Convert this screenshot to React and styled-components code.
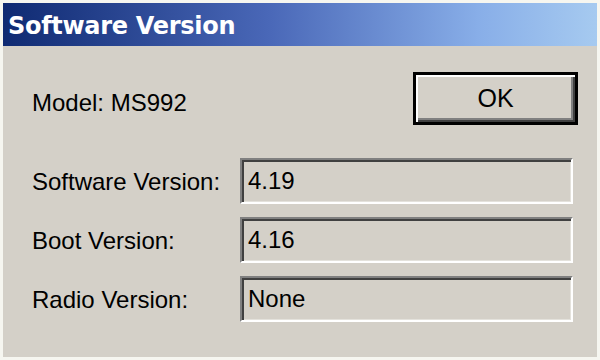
import React from "react";
import styled, { createGlobalStyle } from "styled-components";

const Global = createGlobalStyle`
  html, body {
    margin: 0;
    padding: 0;
    background: #f6f6f0;
  }
`;

const Window = styled.div`
  width: 594px;
  height: 354px;
  margin: 3px;
  display: flex;
  flex-direction: column;
  background: #d4d0c8;
  font-family: "Liberation Sans", Arial, sans-serif;
  color: #000;
  overflow: hidden;
`;

const TitleBar = styled.div`
  height: 43px;
  display: flex;
  align-items: center;
  padding: 3px 0 0 5px;
  box-sizing: border-box;
  background: linear-gradient(90deg, #0f2a72 0%, #4a68b8 45%, #88aee8 80%, #a6caf0 100%);
  color: #fff;
  font-family: "DejaVu Sans", Verdana, sans-serif;
  font-weight: bold;
  font-size: 24px;
  letter-spacing: -0.3px;
`;

const Body = styled.div`
  flex: 1;
  display: flex;
  flex-direction: column;
  padding: 26px 19px 0 29px;
`;

const TopRow = styled.div`
  display: flex;
  justify-content: space-between;
  align-items: flex-start;
  height: 53px;
`;

const Model = styled.div`
  margin-top: 17px;
  font-size: 24px;
  line-height: 28px;
`;

const Button = styled.button`
  width: 165px;
  height: 53px;
  padding: 0;
  background: #d4d0c8;
  border: 3px solid #000;
  box-shadow: inset 2px 2px 0 #ffffff, inset -2px -2px 0 #404040, inset -4px -4px 0 #808080;
  font-family: "Liberation Sans", Arial, sans-serif;
  font-size: 25px;
  color: #000;
`;

const Fields = styled.div`
  margin-top: 33px;
  display: flex;
  flex-direction: column;
  gap: 13px;
`;

const FieldRow = styled.div`
  display: grid;
  grid-template-columns: 208px 333px;
  align-items: center;
  height: 46px;
`;

const Label = styled.div`
  font-size: 24px;
  line-height: 28px;
  padding-top: 2px;
`;

const ValueBox = styled.div`
  height: 46px;
  box-sizing: border-box;
  display: flex;
  align-items: center;
  padding-left: 6px;
  background: #d4d0c8;
  border: 2px solid;
  border-color: #808080 #ffffff #ffffff #808080;
  box-shadow: inset 2px 2px 0 #404040, inset -1px -1px 0 #e4e2dc;
  font-size: 24px;
`;

const fields = [
  { label: "Software Version:", value: "4.19" },
  { label: "Boot Version:", value: "4.16" },
  { label: "Radio Version:", value: "None" },
];

const App = () => {
  return (
    <Window>
      <Global />
      <TitleBar>Software Version</TitleBar>
      <Body>
        <TopRow>
          <Model>Model: MS992</Model>
          <Button>OK</Button>
        </TopRow>
        <Fields>
          {fields.map((f) => (
            <FieldRow key={f.label}>
              <Label>{f.label}</Label>
              <ValueBox>{f.value}</ValueBox>
            </FieldRow>
          ))}
        </Fields>
      </Body>
    </Window>
  );
};

export default App;
